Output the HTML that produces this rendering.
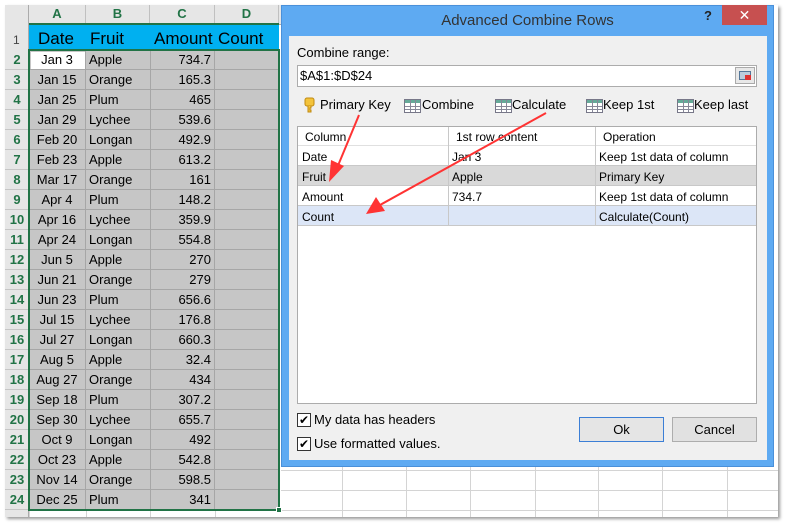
<!DOCTYPE html>
<html><head><style>
body{margin:0;width:787px;height:525px;background:#fff;position:relative;overflow:hidden;font-family:"Liberation Sans",sans-serif;}
.a{position:absolute;box-sizing:border-box;}
.t{position:absolute;white-space:nowrap;}
</style></head><body>
<div class="a" style="left:5px;top:5px;width:773px;height:512px;background:#fff;box-shadow:2px 2px 3px #999;"></div>
<svg class="a" style="left:0;top:0" width="787" height="525">
<g stroke="#d4d4d4" stroke-width="1">
<line x1="342.5" y1="467" x2="342.5" y2="517"/><line x1="406.5" y1="467" x2="406.5" y2="517"/>
<line x1="470.5" y1="467" x2="470.5" y2="517"/><line x1="535.5" y1="467" x2="535.5" y2="517"/>
<line x1="598.5" y1="467" x2="598.5" y2="517"/><line x1="662.5" y1="467" x2="662.5" y2="517"/>
<line x1="727.5" y1="467" x2="727.5" y2="517"/>
<line x1="281" y1="470.5" x2="778" y2="470.5"/><line x1="281" y1="490.5" x2="778" y2="490.5"/><line x1="281" y1="510.5" x2="778" y2="510.5"/>
<line x1="29.5" y1="510" x2="29.5" y2="517"/><line x1="86.5" y1="510" x2="86.5" y2="517"/><line x1="150.5" y1="510" x2="150.5" y2="517"/><line x1="215.5" y1="510" x2="215.5" y2="517"/>
</g></svg>
<div class="a" style="left:5px;top:5px;width:276px;height:20px;background:#e6e6e6;border-bottom:1px solid #ababab"></div>
<div class="a" style="left:5px;top:5px;width:24px;height:512px;background:#e6e6e6;border-right:1px solid #ababab"></div>
<div class="a" style="left:29px;top:23px;width:250px;height:2px;background:#217346"></div>
<div id="colh"></div>
<div class="a" style="left:29px;top:25px;width:250px;height:25px;background:#00b0f0"></div>
<div class="t" style="left:38px;top:29px;font-size:17px;color:#000">Date</div>
<div class="t" style="left:90px;top:29px;font-size:17px">Fruit</div>
<div class="t" style="left:154px;top:29px;font-size:17px">Amount</div>
<div class="t" style="left:218px;top:29px;font-size:17px">Count</div>
<div class="t" style="left:13px;top:33px;font-size:12px;color:#444">1</div>
<div class="a" style="left:29px;top:50px;width:250px;height:460px;background:#c6c6c6"></div>
<div class="a" style="left:31px;top:52px;width:55px;height:18px;background:#fff"></div>
<div id="rows"></div>
<div class="a" style="left:28px;top:49px;width:252px;height:462px;border:2px solid #217346"></div>
<div class="a" style="left:276px;top:507px;width:6px;height:6px;background:#217346;border:1px solid #fff"></div>
<div class="a" style="left:281px;top:5px;width:493px;height:462px;background:#5eaaf2;border:1px solid #4a90d9"></div>
<div class="t" style="left:281px;width:493px;text-align:center;top:12px;font-size:15px;color:#333">Advanced Combine Rows</div>
<div class="t" style="left:704px;top:8px;font-size:13px;font-weight:bold;color:#222">?</div>
<div class="a" style="left:722px;top:5px;width:45px;height:20px;background:#c75050;color:#fff;text-align:center;font-size:14px;line-height:20px">✕</div>
<div class="a" style="left:289px;top:36px;width:478px;height:424px;background:#f0f0f0"></div>
<div class="t" style="left:297px;top:45px;font-size:13px;color:#000">Combine range:</div>
<div class="a" style="left:297px;top:65px;width:460px;height:22px;background:#fff;border:1px solid #acacac"></div>
<div class="t" style="left:300px;top:68px;font-size:13px">$A$1:$D$24</div>
<div class="a" style="left:735px;top:67px;width:20px;height:17px;border:1px solid #aaa;background:#e8e8e8"><div class="a" style="left:3px;top:3px;width:12px;height:9px;background:#bcd;border:1px solid #579"></div><div class="a" style="left:9px;top:7px;width:6px;height:5px;background:#d33"></div></div>
<svg class="a" style="left:304px;top:97px" width="12" height="17"><rect x="1" y="1" width="9" height="8" rx="2" fill="#f3c33b" stroke="#c08a10"/><path d="M4 9 V15 H7 V13 H6 V11 H7 V9" fill="#f3c33b" stroke="#c08a10"/></svg>
<div class="t" style="left:320px;top:97px;font-size:13px">Primary Key</div>
<svg class="a" style="left:404px;top:99px" width="17" height="14"><rect x="0.5" y="0.5" width="16" height="13" fill="#fff" stroke="#778"/><rect x="1" y="1" width="15" height="3" fill="#6a9"/><path d="M1 7.5H16M1 10.5H16M6.5 1V13M11.5 1V13" stroke="#889"/></svg>
<div class="t" style="left:422px;top:97px;font-size:13px">Combine</div>
<svg class="a" style="left:495px;top:99px" width="17" height="14"><rect x="0.5" y="0.5" width="16" height="13" fill="#fff" stroke="#778"/><rect x="1" y="1" width="15" height="3" fill="#6a9"/><path d="M1 7.5H16M1 10.5H16M6.5 1V13M11.5 1V13" stroke="#889"/></svg>
<div class="t" style="left:512px;top:97px;font-size:13px">Calculate</div>
<svg class="a" style="left:586px;top:99px" width="17" height="14"><rect x="0.5" y="0.5" width="16" height="13" fill="#fff" stroke="#778"/><rect x="1" y="1" width="15" height="3" fill="#6a9"/><path d="M1 7.5H16M1 10.5H16M6.5 1V13M11.5 1V13" stroke="#889"/></svg>
<div class="t" style="left:603px;top:97px;font-size:13px">Keep 1st</div>
<svg class="a" style="left:677px;top:99px" width="17" height="14"><rect x="0.5" y="0.5" width="16" height="13" fill="#fff" stroke="#778"/><rect x="1" y="1" width="15" height="3" fill="#6a9"/><path d="M1 7.5H16M1 10.5H16M6.5 1V13M11.5 1V13" stroke="#889"/></svg>
<div class="t" style="left:694px;top:97px;font-size:13px">Keep last</div>
<div class="a" style="left:297px;top:126px;width:460px;height:278px;background:#fff;border:1px solid #acacac"></div>
<div class="a" style="left:298px;top:127px;width:458px;height:19px;background:#fff;border-bottom:1px solid #e0e0e0"></div>
<div class="a" style="left:298px;top:166px;width:458px;height:20px;background:#d9d9d9"></div>
<div class="a" style="left:298px;top:206px;width:458px;height:20px;background:#dce6f7"></div>
<svg class="a" style="left:0;top:0" width="787" height="525">
<g stroke="#c8c8c8"><line x1="448.5" y1="127" x2="448.5" y2="226"/><line x1="595.5" y1="127" x2="595.5" y2="226"/>
<line x1="298" y1="165.5" x2="756" y2="165.5"/><line x1="298" y1="185.5" x2="756" y2="185.5"/><line x1="298" y1="205.5" x2="756" y2="205.5"/><line x1="298" y1="225.5" x2="756" y2="225.5"/></g>
</svg>
<div style="font-size:12px">
<div class="t" style="left:305px;top:130px">Column</div><div class="t" style="left:456px;top:130px">1st row content</div><div class="t" style="left:603px;top:130px">Operation</div>
<div class="t" style="left:302px;top:150px">Date</div><div class="t" style="left:452px;top:150px">Jan 3</div><div class="t" style="left:599px;top:150px">Keep 1st data of column</div>
<div class="t" style="left:302px;top:170px">Fruit</div><div class="t" style="left:452px;top:170px">Apple</div><div class="t" style="left:599px;top:170px">Primary Key</div>
<div class="t" style="left:302px;top:190px">Amount</div><div class="t" style="left:452px;top:190px">734.7</div><div class="t" style="left:599px;top:190px">Keep 1st data of column</div>
<div class="t" style="left:302px;top:210px">Count</div><div class="t" style="left:599px;top:210px">Calculate(Count)</div>
</div>
<svg class="a" style="left:0;top:0" width="787" height="525">
<path d="M359 115 L337 168" stroke="#f33" stroke-width="2"/><path d="M329 182 L331 160 L344 166 Z" fill="#f33"/>
<path d="M546 113 L380 205" stroke="#f33" stroke-width="2"/><path d="M366 214 L376 197 L385 211 Z" fill="#f33"/>
</svg>
<div class="a" style="left:297px;top:413px;width:14px;height:14px;background:#fff;border:1px solid #333;font-size:12px;line-height:12px;text-align:center">✔</div>
<div class="t" style="left:314px;top:412px;font-size:13px">My data has headers</div>
<div class="a" style="left:297px;top:437px;width:14px;height:14px;background:#fff;border:1px solid #333;font-size:12px;line-height:12px;text-align:center">✔</div>
<div class="t" style="left:314px;top:436px;font-size:13px">Use formatted values.</div>
<div class="a" style="left:579px;top:417px;width:85px;height:25px;background:#e5e5e5;border:1px solid #3c7fd6;text-align:center;line-height:23px;font-size:13px">Ok</div>
<div class="a" style="left:672px;top:417px;width:85px;height:25px;background:#e1e1e1;border:1px solid #adadad;text-align:center;line-height:23px;font-size:13px">Cancel</div>
<script>
var cols=[["A",29,57],["B",86,64],["C",150,65],["D",215,64]],h="";
cols.forEach(function(c){h+='<div class="a" style="left:'+c[1]+'px;top:5px;width:'+c[2]+'px;height:18px;border-right:1px solid #c0c0c0;text-align:center;font-size:13px;font-weight:bold;color:#217346;line-height:18px">'+c[0]+'</div>'});
document.getElementById("colh").outerHTML=h;
var d=[["Jan 3","Apple","734.7"],["Jan 15","Orange","165.3"],["Jan 25","Plum","465"],["Jan 29","Lychee","539.6"],["Feb 20","Longan","492.9"],["Feb 23","Apple","613.2"],["Mar 17","Orange","161"],["Apr 4","Plum","148.2"],["Apr 16","Lychee","359.9"],["Apr 24","Longan","554.8"],["Jun 5","Apple","270"],["Jun 21","Orange","279"],["Jun 23","Plum","656.6"],["Jul 15","Lychee","176.8"],["Jul 27","Longan","660.3"],["Aug 5","Apple","32.4"],["Aug 27","Orange","434"],["Sep 18","Plum","307.2"],["Sep 30","Lychee","655.7"],["Oct 9","Longan","492"],["Oct 23","Apple","542.8"],["Nov 14","Orange","598.5"],["Dec 25","Plum","341"]];
h="";
d.forEach(function(r,i){var y=50+i*20;
h+='<div class="a" style="left:5px;top:'+y+'px;width:24px;height:20px;border-bottom:1px solid #c6c6c6;text-align:center;font-size:13px;font-weight:bold;color:#217346;line-height:20px">'+(i+2)+'</div>';
h+='<div class="a" style="left:29px;top:'+y+'px;width:250px;height:20px;border-bottom:1px solid #a6a6a6"></div>';
h+='<div class="a" style="left:29px;top:'+y+'px;width:57px;height:20px;text-align:center;font-size:13px;line-height:20px;border-right:1px solid #a6a6a6">'+r[0]+'</div>';
h+='<div class="a" style="left:89px;top:'+y+'px;height:20px;line-height:20px;font-size:13px;white-space:nowrap">'+r[1]+'</div>';
h+='<div class="a" style="left:150px;top:'+y+'px;width:65px;height:20px;border-left:1px solid #a6a6a6;border-right:1px solid #a6a6a6;text-align:right;padding-right:3px;font-size:13px;line-height:20px">'+r[2]+'</div>';
});
document.getElementById("rows").outerHTML=h;
</script>
</body></html>
